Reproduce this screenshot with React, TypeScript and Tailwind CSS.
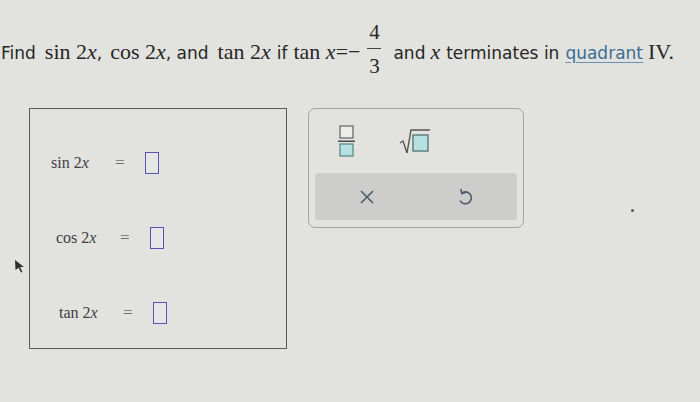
import React from 'react';

const serif = { fontFamily: '"Liberation Serif", "Times New Roman", serif' };

function AnswerBox() {
  return <span className="inline-block w-[14px] h-[22px] border-[1.5px] border-[#5852b6] bg-[#e6e6e4]" />;
}

function Row({ fn, shift }: { fn: string; shift: string }) {
  return (
    <div className={`flex items-center h-[22px] ${shift}`}>
      <span className="w-[64px] text-[16px] text-[#3f3f3f]" style={serif}>
        {fn} 2<i>x</i>
      </span>
      <span className="w-[30px] text-[17px] text-[#6e6e6e]" style={serif}>=</span>
      <AnswerBox />
    </div>
  );
}

export default function App() {
  return (
    <div className="relative w-[700px] h-[402px] overflow-hidden bg-[#e2e2df] text-[#262626]" style={{ fontFamily: '"DejaVu Sans", Verdana, sans-serif' }}>
      {/* Question line */}
      <div className="flex items-baseline h-[50px] mt-[24px] pl-[1px] text-[17px] whitespace-nowrap">
        <span className="self-center mt-[4px] flex items-baseline">
          <span>Find</span>
          <span className="ml-[9px] text-[22px]" style={serif}>sin 2<i>x</i></span>
          <span>,</span>
          <span className="ml-[8px] text-[22px]" style={serif}>cos 2<i>x</i></span>
          <span>, and</span>
          <span className="ml-[9px] text-[22px]" style={serif}>tan 2<i>x</i></span>
          <span className="ml-[6px]">if</span>
          <span className="ml-[6px] text-[22px]" style={serif}>tan <i>x</i>=−</span>
        </span>
        <span className="self-center ml-[7px] inline-flex flex-col items-center text-[21px] leading-none" style={serif}>
          <span className="pb-[5px]">4</span>
          <span className="w-[14px] h-[1px] bg-[#444]" />
          <span className="pt-[7px]">3</span>
        </span>
        <span className="self-center mt-[4px] flex items-baseline">
          <span className="ml-[12px]">and</span>
          <span className="ml-[5px] text-[22px]" style={serif}><i>x</i></span>
          <span className="ml-[6px]">terminates in</span>
          <span className="ml-[6px] text-[#3c6e93] underline underline-offset-[3px] decoration-[#6b8fb0]">quadrant</span>
          <span className="ml-[5px] text-[22px]" style={serif}>IV.</span>
        </span>
      </div>

      <div className="flex items-start mt-[34px] ml-[29px]">
        {/* Answer box */}
        <div className="w-[258px] h-[241px] border-[1.5px] border-[#5a5a5a] flex flex-col pl-[21px] pt-[43px] gap-[53px]">
          <Row fn="sin" shift="" />
          <Row fn="cos" shift="ml-[5px]" />
          <Row fn="tan" shift="ml-[8px]" />
        </div>

        {/* Math palette */}
        <div className="ml-[21px] w-[216px] h-[120px] border-[1.5px] border-[#a3a3a1] rounded-[7px] flex flex-col px-[6px] pt-[16px] pb-[7px]">
          <div className="flex items-start h-[48px]">
            <svg width="20" height="32" viewBox="0 0 20 32" className="ml-[22px]">
              <rect x="3" y="1" width="13" height="12" fill="#ececea" stroke="#6b6b6b" strokeWidth="1.3" />
              <rect x="1" y="15.5" width="17" height="1.5" fill="#4a4a4a" />
              <rect x="3" y="19" width="13" height="12" fill="#b7e1e0" stroke="#5e8a8a" strokeWidth="1.3" />
            </svg>
            <svg width="32" height="28" viewBox="0 0 32 28" className="ml-[42px] mt-[2px]">
              <path d="M1 16 L4 14 L8 26 L12 3 L31 3" fill="none" stroke="#555" strokeWidth="1.4" />
              <rect x="14" y="8" width="15" height="16" fill="#b7e1e0" stroke="#4f7070" strokeWidth="1.3" />
            </svg>
          </div>
          <div className="flex-1 bg-[#cdcdcb] rounded-[3px] flex items-center">
            <svg width="14" height="14" viewBox="0 0 14 14" className="ml-[45px]">
              <path d="M1 1 L13 13 M13 1 L1 13" stroke="#4e5a6e" strokeWidth="1.6" />
            </svg>
            <svg width="16" height="18" viewBox="0 0 16 18" className="ml-[83px]">
              <path d="M4.5 5.2 A6 6 0 1 1 3 12.5" fill="none" stroke="#4e5a6e" strokeWidth="1.6" />
              <path d="M3.8 1 L4.8 5.6 L9 4.2" fill="none" stroke="#4e5a6e" strokeWidth="1.6" />
            </svg>
          </div>
        </div>
      </div>

      {/* stray dot and pointer from the photo */}
      <span className="absolute left-[631px] top-[209px] w-[3px] h-[3px] rounded-full bg-[#555]" />
      <svg width="12" height="14" viewBox="0 0 12 14" className="absolute left-[14px] top-[259px]">
        <path d="M1 1 L10 8 L6 8 L8.5 13 L7 13.5 L4.6 8.8 L1.5 11 Z" fill="#2e2e2e" />
      </svg>
    </div>
  );
}
